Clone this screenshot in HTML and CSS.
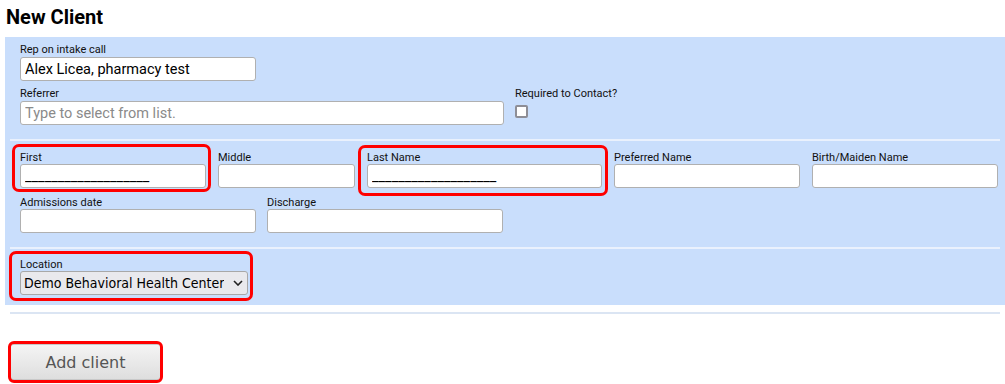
FILE: index.html
```html
<!DOCTYPE html>
<html lang="en">

<head>
    <meta charset="UTF-8">
    <meta name="viewport" content="width=device-width, initial-scale=1.0">
    <title>New Client</title>
    <link rel="stylesheet" href="styles.css">
</head>

<body>
    <h1 class="title">New Client</h1>
    <form class="client-form">
        <div class="panel">
            <div class="row row-top">
                <div class="field">
                    <label>Rep on intake call</label>
                    <input type="text" value="Alex Licea, pharmacy test">
                </div>
                <div class="field-break"></div>
                <div class="field span-2">
                    <label>Referrer</label>
                    <input type="text" placeholder="Type to select from list.">
                </div>
                <div class="field">
                    <label>Required to Contact?</label>
                    <span class="checkbox"></span>
                </div>
            </div>

            <hr class="divider">

            <div class="row row-names">
                <div class="field highlight">
                    <label>First</label>
                    <input type="text" value="___________________">
                </div>
                <div class="field">
                    <label>Middle</label>
                    <input type="text">
                </div>
                <div class="field highlight">
                    <label>Last Name</label>
                    <input type="text" value="___________________">
                </div>
                <div class="field">
                    <label>Preferred Name</label>
                    <input type="text">
                </div>
                <div class="field">
                    <label>Birth/Maiden Name</label>
                    <input type="text">
                </div>
            </div>
            <div class="row row-dates">
                <div class="field">
                    <label>Admissions date</label>
                    <input type="text">
                </div>
                <div class="field">
                    <label>Discharge</label>
                    <input type="text">
                </div>
            </div>

            <hr class="divider">

            <div class="row row-location">
                <div class="field highlight">
                    <label>Location</label>
                    <div class="select">
                        <span class="select-text">Demo Behavioral Health Center T</span>
                        <svg class="caret" width="10" height="6" viewBox="0 0 10 6">
                            <path d="M1 1 L5 5 L9 1" fill="none" stroke="#222" stroke-width="1.6"/>
                        </svg>
                    </div>
                </div>
            </div>
        </div>

        <hr class="footer-line">

        <div class="actions">
            <span class="highlight-btn">
                <button type="button" class="add-btn">Add client</button>
            </span>
        </div>
    </form>
</body>

</html>
```

FILE: styles.css
```css
* {
    margin: 0;
    padding: 0;
    box-sizing: border-box;
}

body {
    font-family: Roboto, "Liberation Sans", sans-serif;
    background-color: #fff;
    color: #111;
    width: 1005px;
    height: 384px;
    overflow: hidden;
}

.title {
    font-size: 20px;
    font-weight: bold;
    padding: 5px 0 0 6px;
    height: 37px;
    color: #000;
}

.panel {
    background-color: #c9defc;
    margin-left: 5px;
    padding: 4px 8px 10px 15px;
}

.row {
    display: grid;
    column-gap: 12px;
}

.row-top {
    grid-template-columns: 236px 236px 236px;
    column-gap: 11.5px;
    row-gap: 4px;
}

.field-break {
    grid-column: span 2;
}

.span-2 {
    grid-column: span 2;
}

.row-names {
    grid-template-columns: 186px 137px 235px 186px 186px;
    padding-top: 7px;
}

.row-dates {
    grid-template-columns: 236px 236px;
    column-gap: 11px;
    padding-top: 5px;
}

.row-location {
    grid-template-columns: 228px;
    padding-top: 6px;
}

.field {
    position: relative;
    display: flex;
    flex-direction: column;
}

.field label {
    font-size: 11px;
    line-height: 14px;
    padding-top: 2px;
    color: #111;
}

.row-names .field label,
.row-dates .field label,
.row-location .field label {
    padding-top: 3px;
    margin-bottom: -1px;
}

.field input {
    height: 24px;
    border: 1px solid #b0b0b0;
    border-radius: 3px;
    background: #fff;
    font-family: Roboto, "Liberation Sans", sans-serif;
    font-size: 14.5px;
    padding: 0 4px;
    color: #000;
    outline: none;
}

.field input::placeholder {
    color: #8a8a8a;
}

.checkbox {
    display: block;
    width: 13px;
    height: 13px;
    margin-top: 4px;
    border: 2px solid #8e8e96;
    border-radius: 2px;
    background: #fff;
}

.divider {
    border: none;
    border-top: 2px solid #eaf1fd;
    margin: 14px -3px 0 -10px;
}

.highlight::before {
    content: "";
    position: absolute;
    left: -8px;
    top: -4px;
    right: -5px;
    bottom: -4px;
    border: 3px solid #f00;
    border-radius: 7px;
}

.row-names .highlight:nth-child(3)::before {
    left: -9px;
    top: -3px;
    right: -6px;
    bottom: -8px;
}

.row-location .highlight::before {
    left: -11px;
    top: -4px;
    right: -5px;
    bottom: -6px;
}

.select {
    display: flex;
    align-items: center;
    justify-content: space-between;
    height: 24px;
    border: 1px solid #a8a8a8;
    border-radius: 3px;
    background: #e9e9ed;
    padding: 0 4px 0 3px;
    overflow: hidden;
}

.select-text {
    font-family: "DejaVu Sans Condensed", "DejaVu Sans", Verdana, sans-serif;
    font-stretch: condensed;
    font-size: 14px;
    white-space: nowrap;
    overflow: hidden;
    width: 200px;
    color: #000;
}

.caret {
    flex-shrink: 0;
}

.footer-line {
    border: none;
    border-top: 2px solid #dbe5f3;
    margin: 7px 5px 0 10px;
}

.actions {
    padding: 30px 0 0 10px;
}

.highlight-btn {
    display: inline-block;
    position: relative;
}

.highlight-btn::before {
    content: "";
    position: absolute;
    left: -2px;
    top: -3px;
    right: -2px;
    bottom: -3px;
    border: 3px solid #f00;
    border-radius: 6px;
}

.add-btn {
    display: block;
    width: 151px;
    height: 36px;
    border: 1px solid #c8c8c8;
    border-radius: 3px;
    background: linear-gradient(#f4f4f4, #dedede);
    font-family: "DejaVu Sans", Verdana, sans-serif;
    font-size: 16px;
    color: #555;
    cursor: pointer;
}
```
